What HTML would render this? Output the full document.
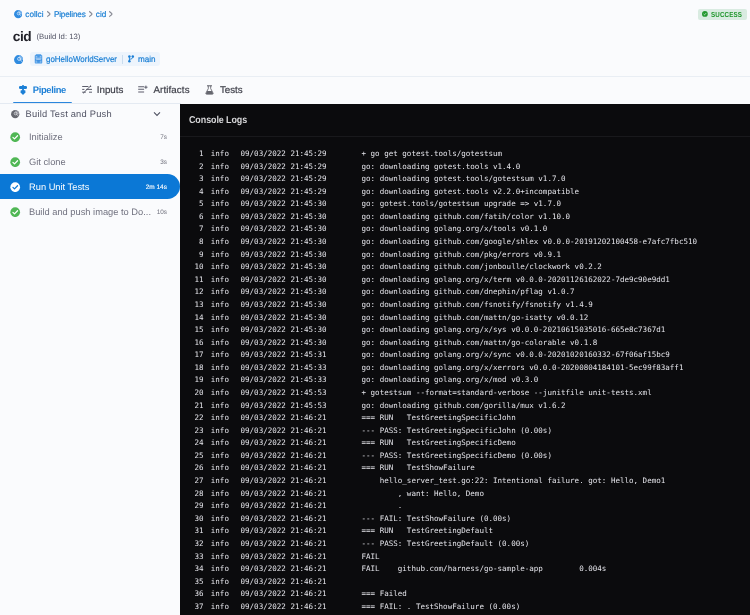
<!DOCTYPE html>
<html><head><meta charset="utf-8"><title>cid</title>
<style>
*{box-sizing:border-box;margin:0;padding:0}
html,body{width:750px;height:615px;overflow:hidden;background:#fafbfd;font-family:"Liberation Sans",sans-serif;color:#22222a;text-rendering:geometricPrecision}
.abs{position:absolute;white-space:nowrap}
.bc{top:9.7px;font-size:8.2px;line-height:10px;color:#1a7fd4;-webkit-text-stroke:0.2px #1a7fd4}
.bc.gt{color:#777986;-webkit-text-stroke:0.3px #777986;font-size:12px;top:8.7px;transform:scaleX(0.5);transform-origin:0 50%}
.title{left:12.8px;top:27.9px;font-size:13.7px;line-height:18px;font-weight:bold;color:#22222a;letter-spacing:-0.45px}
.bid{left:36.5px;top:31.8px;font-size:7.75px;line-height:10px;color:#4f5162}
.pill{left:30px;top:52px;width:130px;height:13.8px;background:#edf4fc;border-radius:3px}
.repo{left:45.6px;top:54.3px;font-size:8.6px;line-height:10px;color:#1a7fd4;-webkit-text-stroke:0.2px #1a7fd4;transform:scaleX(0.925);transform-origin:0 0}
.branch{left:136px;top:54.3px;font-size:7.6px;line-height:10px;color:#1a7fd4}
.sep{left:122px;top:55px;width:1px;height:9px;background:#c9dcee}
.hr1{left:0;top:76px;width:750px;height:1px;background:#e9eef4}
.hr2{left:0;top:103px;width:181px;height:1px;background:#e4eaf2}
.tab{top:84.7px;font-size:9.75px;line-height:12px;color:#3e3f49;-webkit-text-stroke:0.2px #3e3f49}
.tab.act{top:83.9px;-webkit-text-stroke:0;color:#1b7fd6;font-weight:bold;letter-spacing:-0.35px;font-size:9.4px}
.ul{left:13px;top:101.7px;width:58.6px;height:2.3px;background:#2a86dd;border-radius:1px}
.badge{left:697.5px;top:8.8px;width:49px;height:10.8px;background:#d9ebe1;border-radius:2px}
.badge span{position:absolute;left:13.3px;top:2.5px;font-size:7.3px;line-height:8px;font-weight:bold;color:#1f962c;letter-spacing:0.18px;transform:scaleX(0.85);transform-origin:0 0;white-space:nowrap}
.side{left:0;top:104px;width:180px;height:511px;background:#fafbfd}
.stg{left:25.6px;top:108.1px;font-size:9.3px;line-height:12px;color:#4f5162;letter-spacing:0.22px}
.step{left:0;width:180px;height:25px}
.step .t{position:absolute;left:29px;top:6.6px;font-size:9.3px;line-height:12px;color:#70717f;white-space:nowrap}
.step .d{position:absolute;right:13px;top:8.6px;font-size:6.4px;line-height:10px;color:#72737f;white-space:nowrap}
.step .ck{position:absolute;left:10.25px;top:7.8px;width:10.4px;height:10.4px}
.step.sel{background:#0b78d6;border-radius:0 12.5px 12.5px 0}
.step.sel .t{color:#fff;top:6.4px}
.step.sel .d{color:#fff;font-size:6.5px;-webkit-text-stroke:0.12px #fff}
.con{left:180px;top:104px;width:570px;height:511px;background:#0b0b0d}
.con h3{position:absolute;left:9.2px;top:10.8px;font-size:10px;line-height:12px;font-weight:bold;color:#d6d6d8;letter-spacing:-0.1px;transform:scaleX(0.895);transform-origin:0 0;white-space:nowrap}
.con .dv{position:absolute;left:0;top:32px;width:570px;height:1px;background:#19191c}
.log{position:absolute;left:0;top:44px;width:570px;font-family:"DejaVu Sans Mono","Liberation Mono",monospace;font-size:7.54px;color:#e4e4ea;text-rendering:auto}
.ln{position:relative;height:12.59px;line-height:12.59px;white-space:pre}
.ln span{position:absolute;top:0}
.n{left:0;width:23.5px;text-align:right}
.lv{left:30.8px}
.ts{left:60.5px}
.m{left:181.5px}
</style></head><body><div class="abs" style="left:0;top:0;width:750px;height:615px;will-change:transform">
<!-- header -->
<svg class="abs" style="left:13.9px;top:10.2px;width:8.4px;height:8.4px" viewBox="0 0 12 12"><circle cx="6" cy="6" r="5.9" fill="#2f8be0"/><path d="M6.3 0.2 A5.8 5.8 0 0 1 11.8 6.6 L6.3 6 Z" fill="#a9d0f5" opacity="0.55"/><circle cx="6.6" cy="5" r="2" fill="none" stroke="#eef5fd" stroke-width="0.9"/><path d="M8 6.5 L10.6 8.6" stroke="#eef5fd" stroke-width="0.9"/></svg>
<div class="abs bc" style="left:25.3px">collci</div><div class="abs bc gt" style="left:47.2px">&gt;</div><div class="abs bc" style="left:53.9px;letter-spacing:-0.17px">Pipelines</div><div class="abs bc gt" style="left:88.6px">&gt;</div><div class="abs bc" style="left:95.8px">cid</div><div class="abs bc gt" style="left:109.4px">&gt;</div>
<div class="abs title">cid</div>
<div class="abs bid">(Build Id: 13)</div>
<svg class="abs" style="left:13.8px;top:54.6px;width:9.3px;height:9.3px" viewBox="0 0 12 12"><circle cx="6" cy="6" r="5.9" fill="#2f8be0"/><path d="M6.3 0.2 A5.8 5.8 0 0 1 11.8 6.6 L6.3 6 Z" fill="#a9d0f5" opacity="0.55"/><circle cx="6.6" cy="5" r="2" fill="none" stroke="#eef5fd" stroke-width="0.9"/><path d="M8 6.5 L10.6 8.6" stroke="#eef5fd" stroke-width="0.9"/></svg>
<div class="abs pill"></div>
<svg class="abs" style="left:34px;top:54.4px;width:9px;height:9.6px" viewBox="0 0 8 10"><path d="M1.6 0.2H6.4L7.9 1.7V9Q7.9 9.8 7.1 9.8H0.9Q0.1 9.8 0.1 9V1.7Z" fill="#4a9ae6"/><path d="M1 2.9h1.7M5.3 2.9h1.7M1 4.4h6M1.6 5.9h4.8M1 8.3h1.7M5.3 8.3h1.7" stroke="#dbeafb" stroke-width="0.7"/><path d="M2.5 7.1h3" stroke="#2b7fd6" stroke-width="0.8"/></svg>
<div class="abs repo">goHelloWorldServer</div>
<div class="abs sep"></div>
<svg class="abs" style="left:128.4px;top:55.4px;width:6.2px;height:7.6px" viewBox="0 0 6.2 7.6"><circle cx="1.4" cy="1.4" r="1.25" fill="#1b7fd6"/><circle cx="1.4" cy="6.2" r="1.25" fill="#1b7fd6"/><circle cx="4.8" cy="1.4" r="1.25" fill="#1b7fd6"/><path d="M1.4 1.4V6.2M4.8 1.4V2.4Q4.8 4 1.4 4.4" fill="none" stroke="#1b7fd6" stroke-width="0.9"/></svg>
<div class="abs repo" style="left:138px;transform:scaleX(0.945)">main</div>
<div class="abs badge"><svg style="position:absolute;left:4.8px;top:2.5px;width:5.8px;height:5.8px" viewBox="0 0 12 12"><circle cx="6" cy="6" r="6" fill="#23982f"/><path d="M3.3 6.2 L5.2 8 L8.7 4.3" fill="none" stroke="#d9ebe1" stroke-width="1.6"/></svg><span>SUCCESS</span></div>
<div class="abs hr1"></div>
<!-- tabs -->
<svg class="abs" style="left:18.8px;top:85px;width:8px;height:10px" viewBox="0 0 8 10"><rect x="0" y="0.9" width="8" height="3.1" rx="1.3" fill="#1b7fd6"/><rect x="3.1" y="0" width="1.8" height="6" rx="0.6" fill="#1b7fd6"/><path d="M2.2 5.2H5.8Q6.4 5.2 6.4 5.8V7.6L4 9.9L1.6 7.6V5.8Q1.6 5.2 2.2 5.2Z" fill="#1b7fd6"/></svg>
<div class="abs tab act" style="left:32.8px">Pipeline</div>
<div class="abs ul"></div>
<svg class="abs" style="left:81.7px;top:85.4px;width:10px;height:9px" viewBox="0 0 10 9"><path d="M0.2 1.5h6.2M8 1.5h1.2M0.2 4.4h2.2M4 4.4h6M0.2 7.2h3.6M7 7.2h3M1 8.4L9 0.5" fill="none" stroke="#5c5d6c" stroke-width="1"/></svg>
<div class="abs tab" style="left:96.8px">Inputs</div>
<svg class="abs" style="left:138px;top:85px;width:10px;height:9px" viewBox="0 0 10 9"><path d="M0.2 1.8h5.9M0.2 4.3h5.9M0.2 6.9h5.9" fill="none" stroke="#5c5d6c" stroke-width="1.05"/><path d="M7.9 0.6V3.8M6.3 2.2H9.5" stroke="#5c5d6c" stroke-width="1"/></svg>
<div class="abs tab" style="left:153.4px;letter-spacing:0.12px">Artifacts</div>
<svg class="abs" style="left:205px;top:85.1px;width:9px;height:10px" viewBox="0 0 9 10"><path d="M2 0.8H7" stroke="#66676f" stroke-width="1.1"/><path d="M3.3 0.8V3.6L0.9 8.2Q0.6 9.2 1.6 9.2H7.4Q8.4 9.2 8.1 8.2L5.7 3.6V0.8" fill="none" stroke="#66676f" stroke-width="0.9"/><path d="M2.2 6H6.8L8 8.4Q8.1 9.1 7.4 9.1H1.6Q0.9 9.1 1 8.4Z" fill="#66676f"/></svg>
<div class="abs tab" style="left:219.9px">Tests</div>
<div class="abs hr2"></div>
<!-- sidebar -->
<div class="abs side"></div>
<svg class="abs" style="left:11.2px;top:110.2px;width:8.4px;height:8.4px" viewBox="0 0 12 12"><circle cx="6" cy="6" r="5.9" fill="#66676f"/><path d="M6.3 0.2 A5.8 5.8 0 0 1 11.8 6.6 L6.3 6 Z" fill="#b9bac2" opacity="0.55"/><circle cx="6.6" cy="5" r="2" fill="none" stroke="#f1f2f6" stroke-width="0.9"/><path d="M8 6.5 L10.6 8.6" stroke="#f1f2f6" stroke-width="0.9"/></svg>
<div class="abs stg">Build Test and Push</div>
<svg class="abs" style="left:153px;top:111px;width:8px;height:6px" viewBox="0 0 8 6"><path d="M1 1.4L4 4.4L7 1.4" fill="none" stroke="#4f5162" stroke-width="1.1"/></svg>
<div class="abs step" style="top:124px"><svg class="ck" viewBox="0 0 12 12"><circle cx="6" cy="6" r="5.6" fill="#50b755"/><path d="M3.4 6.2 L5.2 8 L8.7 4.3" fill="none" stroke="#fff" stroke-width="1.4" stroke-linecap="round" stroke-linejoin="round"/></svg><span class="t">Initialize</span><span class="d">7s</span></div>
<div class="abs step" style="top:149px"><svg class="ck" viewBox="0 0 12 12"><circle cx="6" cy="6" r="5.6" fill="#50b755"/><path d="M3.4 6.2 L5.2 8 L8.7 4.3" fill="none" stroke="#fff" stroke-width="1.4" stroke-linecap="round" stroke-linejoin="round"/></svg><span class="t">Git clone</span><span class="d">3s</span></div>
<div class="abs step sel" style="top:174.2px"><svg class="ck" viewBox="0 0 12 12"><circle cx="6" cy="6" r="5.6" fill="#fff"/><path d="M3.4 6.2 L5.2 8 L8.7 4.3" fill="none" stroke="#0b78d6" stroke-width="1.4" stroke-linecap="round" stroke-linejoin="round"/></svg><span class="t">Run Unit Tests</span><span class="d">2m 14s</span></div>
<div class="abs step" style="top:199px"><svg class="ck" viewBox="0 0 12 12"><circle cx="6" cy="6" r="5.6" fill="#50b755"/><path d="M3.4 6.2 L5.2 8 L8.7 4.3" fill="none" stroke="#fff" stroke-width="1.4" stroke-linecap="round" stroke-linejoin="round"/></svg><span class="t">Build and push image to Do...</span><span class="d">10s</span></div>
<!-- console -->
<div class="abs con">
<h3>Console Logs</h3>
<div class="dv"></div>
<div class="log">
<div class="ln"><span class="n">1</span><span class="lv">info</span><span class="ts">09/03/2022 21:45:29</span><span class="m">+ go get gotest.tools/gotestsum</span></div>
<div class="ln"><span class="n">2</span><span class="lv">info</span><span class="ts">09/03/2022 21:45:29</span><span class="m">go: downloading gotest.tools v1.4.0</span></div>
<div class="ln"><span class="n">3</span><span class="lv">info</span><span class="ts">09/03/2022 21:45:29</span><span class="m">go: downloading gotest.tools/gotestsum v1.7.0</span></div>
<div class="ln"><span class="n">4</span><span class="lv">info</span><span class="ts">09/03/2022 21:45:29</span><span class="m">go: downloading gotest.tools v2.2.0+incompatible</span></div>
<div class="ln"><span class="n">5</span><span class="lv">info</span><span class="ts">09/03/2022 21:45:30</span><span class="m">go: gotest.tools/gotestsum upgrade =&gt; v1.7.0</span></div>
<div class="ln"><span class="n">6</span><span class="lv">info</span><span class="ts">09/03/2022 21:45:30</span><span class="m">go: downloading github.com/fatih/color v1.10.0</span></div>
<div class="ln"><span class="n">7</span><span class="lv">info</span><span class="ts">09/03/2022 21:45:30</span><span class="m">go: downloading golang.org/x/tools v0.1.0</span></div>
<div class="ln"><span class="n">8</span><span class="lv">info</span><span class="ts">09/03/2022 21:45:30</span><span class="m">go: downloading github.com/google/shlex v0.0.0-20191202100458-e7afc7fbc510</span></div>
<div class="ln"><span class="n">9</span><span class="lv">info</span><span class="ts">09/03/2022 21:45:30</span><span class="m">go: downloading github.com/pkg/errors v0.9.1</span></div>
<div class="ln"><span class="n">10</span><span class="lv">info</span><span class="ts">09/03/2022 21:45:30</span><span class="m">go: downloading github.com/jonboulle/clockwork v0.2.2</span></div>
<div class="ln"><span class="n">11</span><span class="lv">info</span><span class="ts">09/03/2022 21:45:30</span><span class="m">go: downloading golang.org/x/term v0.0.0-20201126162022-7de9c90e9dd1</span></div>
<div class="ln"><span class="n">12</span><span class="lv">info</span><span class="ts">09/03/2022 21:45:30</span><span class="m">go: downloading github.com/dnephin/pflag v1.0.7</span></div>
<div class="ln"><span class="n">13</span><span class="lv">info</span><span class="ts">09/03/2022 21:45:30</span><span class="m">go: downloading github.com/fsnotify/fsnotify v1.4.9</span></div>
<div class="ln"><span class="n">14</span><span class="lv">info</span><span class="ts">09/03/2022 21:45:30</span><span class="m">go: downloading github.com/mattn/go-isatty v0.0.12</span></div>
<div class="ln"><span class="n">15</span><span class="lv">info</span><span class="ts">09/03/2022 21:45:30</span><span class="m">go: downloading golang.org/x/sys v0.0.0-20210615035016-665e8c7367d1</span></div>
<div class="ln"><span class="n">16</span><span class="lv">info</span><span class="ts">09/03/2022 21:45:30</span><span class="m">go: downloading github.com/mattn/go-colorable v0.1.8</span></div>
<div class="ln"><span class="n">17</span><span class="lv">info</span><span class="ts">09/03/2022 21:45:31</span><span class="m">go: downloading golang.org/x/sync v0.0.0-20201020160332-67f06af15bc9</span></div>
<div class="ln"><span class="n">18</span><span class="lv">info</span><span class="ts">09/03/2022 21:45:33</span><span class="m">go: downloading golang.org/x/xerrors v0.0.0-20200804184101-5ec99f83aff1</span></div>
<div class="ln"><span class="n">19</span><span class="lv">info</span><span class="ts">09/03/2022 21:45:33</span><span class="m">go: downloading golang.org/x/mod v0.3.0</span></div>
<div class="ln"><span class="n">20</span><span class="lv">info</span><span class="ts">09/03/2022 21:45:53</span><span class="m">+ gotestsum --format=standard-verbose --junitfile unit-tests.xml</span></div>
<div class="ln"><span class="n">21</span><span class="lv">info</span><span class="ts">09/03/2022 21:45:53</span><span class="m">go: downloading github.com/gorilla/mux v1.6.2</span></div>
<div class="ln"><span class="n">22</span><span class="lv">info</span><span class="ts">09/03/2022 21:46:21</span><span class="m">=== RUN   TestGreetingSpecificJohn</span></div>
<div class="ln"><span class="n">23</span><span class="lv">info</span><span class="ts">09/03/2022 21:46:21</span><span class="m">--- PASS: TestGreetingSpecificJohn (0.00s)</span></div>
<div class="ln"><span class="n">24</span><span class="lv">info</span><span class="ts">09/03/2022 21:46:21</span><span class="m">=== RUN   TestGreetingSpecificDemo</span></div>
<div class="ln"><span class="n">25</span><span class="lv">info</span><span class="ts">09/03/2022 21:46:21</span><span class="m">--- PASS: TestGreetingSpecificDemo (0.00s)</span></div>
<div class="ln"><span class="n">26</span><span class="lv">info</span><span class="ts">09/03/2022 21:46:21</span><span class="m">=== RUN   TestShowFailure</span></div>
<div class="ln"><span class="n">27</span><span class="lv">info</span><span class="ts">09/03/2022 21:46:21</span><span class="m">    hello_server_test.go:22: Intentional failure. got: Hello, Demo1</span></div>
<div class="ln"><span class="n">28</span><span class="lv">info</span><span class="ts">09/03/2022 21:46:21</span><span class="m">        , want: Hello, Demo</span></div>
<div class="ln"><span class="n">29</span><span class="lv">info</span><span class="ts">09/03/2022 21:46:21</span><span class="m">        .</span></div>
<div class="ln"><span class="n">30</span><span class="lv">info</span><span class="ts">09/03/2022 21:46:21</span><span class="m">--- FAIL: TestShowFailure (0.00s)</span></div>
<div class="ln"><span class="n">31</span><span class="lv">info</span><span class="ts">09/03/2022 21:46:21</span><span class="m">=== RUN   TestGreetingDefault</span></div>
<div class="ln"><span class="n">32</span><span class="lv">info</span><span class="ts">09/03/2022 21:46:21</span><span class="m">--- PASS: TestGreetingDefault (0.00s)</span></div>
<div class="ln"><span class="n">33</span><span class="lv">info</span><span class="ts">09/03/2022 21:46:21</span><span class="m">FAIL</span></div>
<div class="ln"><span class="n">34</span><span class="lv">info</span><span class="ts">09/03/2022 21:46:21</span><span class="m">FAIL    github.com/harness/go-sample-app        0.004s</span></div>
<div class="ln"><span class="n">35</span><span class="lv">info</span><span class="ts">09/03/2022 21:46:21</span><span class="m"></span></div>
<div class="ln"><span class="n">36</span><span class="lv">info</span><span class="ts">09/03/2022 21:46:21</span><span class="m">=== Failed</span></div>
<div class="ln"><span class="n">37</span><span class="lv">info</span><span class="ts">09/03/2022 21:46:21</span><span class="m">=== FAIL: . TestShowFailure (0.00s)</span></div>
</div>
</div>
</div></body></html>
